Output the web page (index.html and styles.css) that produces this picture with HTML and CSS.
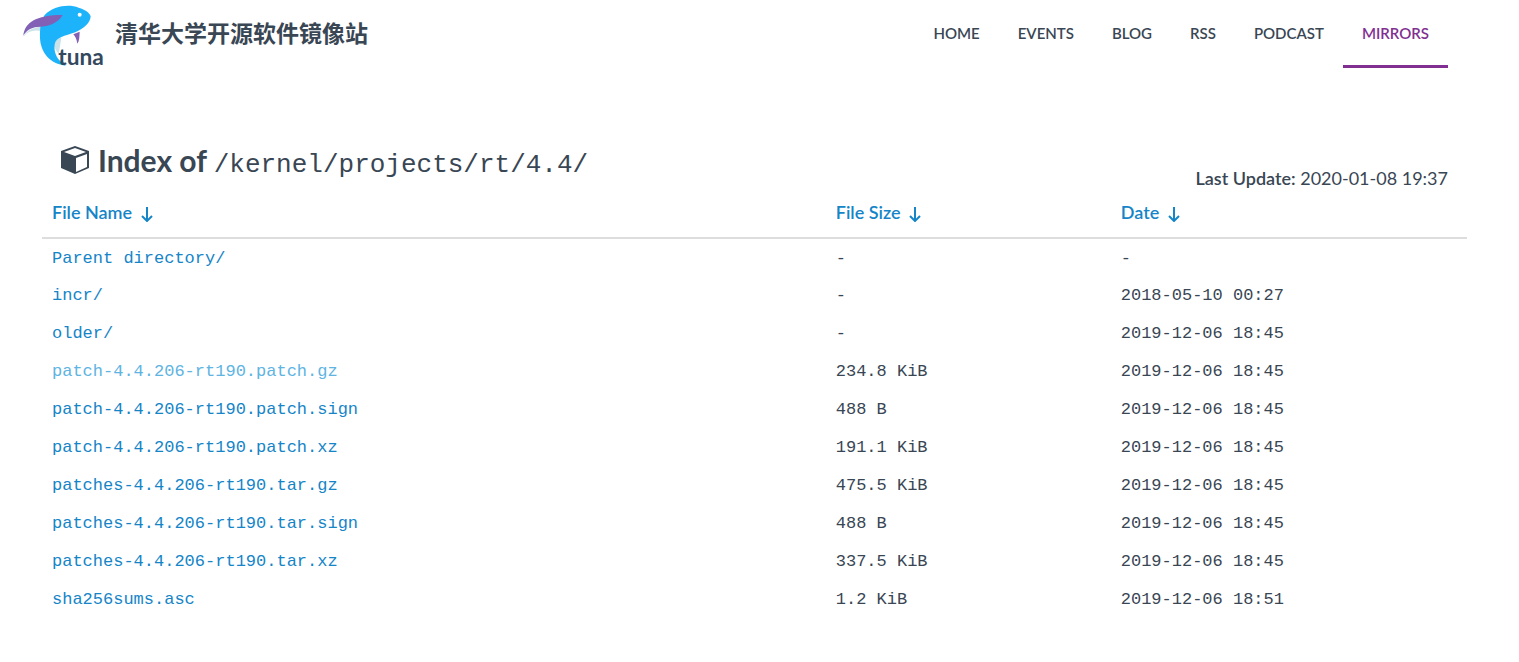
FILE: index.html
```html
<!DOCTYPE html>
<html lang="zh-CN">
<head>
    <meta charset="UTF-8">
    <title>Index of /kernel/projects/rt/4.4/</title>
    <link rel="stylesheet" href="styles.css">
</head>
<body>
    <header class="header">
        <a class="brand" href="#">
            <svg class="logo" viewBox="36 12 246 186" aria-hidden="true">
                <path d="M40 108C50 86 75 78 104 76L88 90C70 86 52 92 40 108Z" fill="#c9e3e8"/>
                <path d="M137 100C126 118 128 140 146 158L154 112Z" fill="#c9e3e8"/>
                <path d="M104 42C130 16 174 8 206 20C226 26 240 36 242 46C241 66 222 82 196 94C164 106 138 108 134 130C130 158 144 180 168 194C120 190 92 154 90 112C89 84 92 58 104 42Z" fill="#1db3fb"/>
                <path d="M40 104C44 66 76 42 158 42C144 68 112 78 82 78C62 80 48 90 40 104Z" fill="#8260b5"/>
                <path d="M190 100L209 92C208 106 209 118 202 128C200 114 196 106 190 100Z" fill="#8260b5"/>
                <circle cx="209" cy="41" r="6" fill="#fff"/>
                <text class="logo-text" x="145" y="192">tuna</text>
            </svg>
            <span>清华大学开源软件镜像站</span>
        </a>
        <nav class="nav">
            <a href="#">HOME</a>
            <a href="#">EVENTS</a>
            <a href="#">BLOG</a>
            <a href="#">RSS</a>
            <a href="#">PODCAST</a>
            <a class="active" href="#">MIRRORS</a>
        </nav>
    </header>
    <main class="content">
        <div class="title">
            <h1>
                <svg class="cube" viewBox="0 0 30 30" aria-hidden="true">
                    <path d="M15 1L29 6V23L15 29L1 23V6Z" fill="#394654"/>
                    <path d="M15 3L26 7L15 11L4 7Z" fill="#fff"/>
                    <path d="M16 13L27 9V22L16 27Z" fill="#fff"/>
                </svg>
                <span>Index of <span class="path">/kernel/projects/rt/4.4/</span></span>
            </h1>
            <p class="update"><b>Last Update:</b> 2020-01-08 19:37</p>
        </div>
        <table class="list">
            <thead>
                <tr>
                    <th class="name"><a href="#">File Name <svg class="arrow" viewBox="0 0 12 16" aria-hidden="true"><path d="M6 1V14M1 10L6 15L11 10"/></svg></a></th>
                    <th class="size"><a href="#">File Size <svg class="arrow" viewBox="0 0 12 16" aria-hidden="true"><path d="M6 1V14M1 10L6 15L11 10"/></svg></a></th>
                    <th class="date"><a href="#">Date <svg class="arrow" viewBox="0 0 12 16" aria-hidden="true"><path d="M6 1V14M1 10L6 15L11 10"/></svg></a></th>
                </tr>
            </thead>
            <tbody>
                <tr><td><a href="#">Parent directory/</a></td><td>-</td><td>-</td></tr>
                <tr><td><a href="#">incr/</a></td><td>-</td><td>2018-05-10 00:27</td></tr>
                <tr><td><a href="#">older/</a></td><td>-</td><td>2019-12-06 18:45</td></tr>
                <tr><td><a class="light" href="#">patch-4.4.206-rt190.patch.gz</a></td><td>234.8 KiB</td><td>2019-12-06 18:45</td></tr>
                <tr><td><a href="#">patch-4.4.206-rt190.patch.sign</a></td><td>488 B</td><td>2019-12-06 18:45</td></tr>
                <tr><td><a href="#">patch-4.4.206-rt190.patch.xz</a></td><td>191.1 KiB</td><td>2019-12-06 18:45</td></tr>
                <tr><td><a href="#">patches-4.4.206-rt190.tar.gz</a></td><td>475.5 KiB</td><td>2019-12-06 18:45</td></tr>
                <tr><td><a href="#">patches-4.4.206-rt190.tar.sign</a></td><td>488 B</td><td>2019-12-06 18:45</td></tr>
                <tr><td><a href="#">patches-4.4.206-rt190.tar.xz</a></td><td>337.5 KiB</td><td>2019-12-06 18:45</td></tr>
                <tr><td><a href="#">sha256sums.asc</a></td><td>1.2 KiB</td><td>2019-12-06 18:51</td></tr>
            </tbody>
        </table>
    </main>
</body>
</html>
```
FILE: styles.css
```css
* {
    margin: 0;
    padding: 0;
    box-sizing: border-box;
}
body {
    background: #fff;
    color: #394654;
    font: 18px/24px Lato, "Noto Sans CJK SC", sans-serif;
}
a {
    color: #1585c8;
    text-decoration: none;
}
.header {
    display: flex;
    justify-content: space-between;
    height: 68px;
    padding: 0 71px 0 22px;
}
.brand {
    display: flex;
    align-items: center;
    gap: 11px;
    color: #394654;
    font: bold 23px/32px "Noto Sans CJK SC", sans-serif;
}
.brand span {
    padding-bottom: 4px;
}
.logo {
    width: 82px;
    height: 62px;
    margin-top: 4px;
    overflow: visible;
}
.logo-text {
    fill: #34495e;
    font: bold 68px Lato, sans-serif;
}
.nav {
    display: flex;
}
.nav a {
    padding: 0 19px;
    color: #394654;
    font-size: 15px;
    font-weight: 600;
    line-height: 66px;
}
.nav .active {
    color: #812f91;
    border-bottom: 3px solid #812f91;
}
.content {
    padding: 68px 52px 32px 42px;
}
.title {
    display: flex;
    justify-content: space-between;
    align-items: flex-end;
    padding: 0 19px 0 18px;
}
.title h1 {
    display: flex;
    align-items: center;
    gap: 8px;
    padding-bottom: 8px;
    font-size: 30px;
    line-height: 48px;
    font-weight: bold;
}
.cube {
    width: 30px;
    height: 30px;
}
.path {
    font: 26px/32px "Liberation Mono", monospace;
}
.update {
    line-height: 28px;
}
.update b {
    font-weight: 600;
}
.list {
    width: 100%;
    table-layout: fixed;
    border-collapse: collapse;
}
.list th {
    height: 46px;
    padding: 0 10px 6px;
    border-bottom: 2px solid #ddd;
    text-align: left;
    font-weight: 600;
}
.list td {
    height: 38px;
    padding: 2px 10px 0;
    font: 17px/24px "Liberation Mono", monospace;
}
.name {
    width: 55%;
}
.size {
    width: 20%;
}
.arrow {
    width: 12px;
    height: 16px;
    margin-left: 4px;
    vertical-align: -3px;
    fill: none;
    stroke: #1585c8;
    stroke-width: 2;
}
.light {
    color: #60b4e2;
}
```
